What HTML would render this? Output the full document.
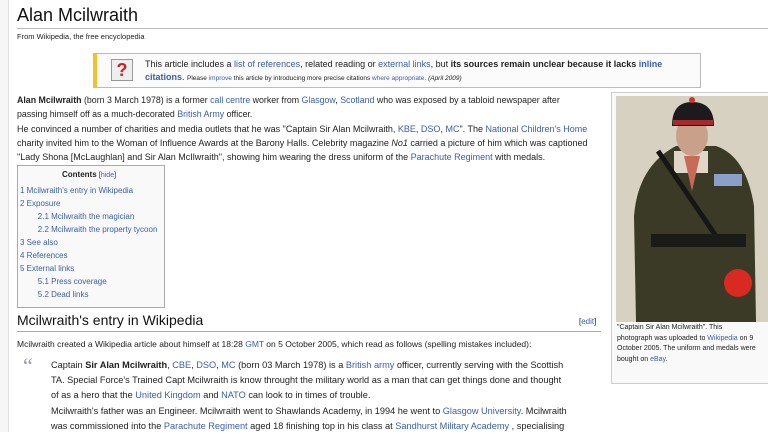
<html><head><style>
body{margin:0;width:768px;height:432px;overflow:hidden;background:#fff;font-family:"Liberation Sans",sans-serif;color:#222;position:relative}
a,.l{color:#3a5fa8}
.a{position:absolute;white-space:nowrap}
p{margin:0}
.t{font-size:9px;line-height:14px}
</style></head><body>
<div style="position:absolute;left:0;top:0;width:8px;height:432px;background:#f6f6f6;border-right:1px solid #e0e0e0"></div>
<div class="a" style="left:17px;top:5px;font-size:18px;color:#111">Alan Mcilwraith</div>
<div style="position:absolute;left:17px;top:28px;width:751px;height:1px;background:#bbb"></div>
<div class="a" style="left:17px;top:32px;font-size:7.5px">From Wikipedia, the free encyclopedia</div>
<div style="position:absolute;left:93px;top:53px;width:603px;height:33px;border:1px solid #bbb;border-left:4px solid #f2c12e;background:#fbfbfb"></div>
<div style="position:absolute;left:111px;top:59px;width:20px;height:20px;border:1px solid #999;background:#eee;color:#c22;font-size:18px;text-align:center;line-height:20px;font-weight:bold">?</div>
<div class="a" style="left:145px;top:59px;font-size:9px">This article includes a <span class="l">list of references</span>, related reading or <span class="l">external links</span>, but <b>its sources remain unclear because it lacks <span class="l">inline</span></b></div>
<div class="a" style="left:145px;top:72px;font-size:9px"><b class="l">citations</b>. <span style="font-size:6.5px">Please <span class="l">improve</span> this article by introducing more precise citations <span class="l">where appropriate</span>. <i>(April 2009)</i></span></div>
<div class="a t" style="left:17px;top:93px;font-size:8.8px"><b>Alan Mcilwraith</b> (born 3 March 1978) is a former <span class="l">call centre</span> worker from <span class="l">Glasgow</span>, <span class="l">Scotland</span> who was exposed by a tabloid newspaper after<br>passing himself off as a much-decorated <span class="l">British Army</span> officer.</div>
<div class="a t" style="left:17px;top:122px">He convinced a number of charities and media outlets that he was "Captain Sir Alan Mcilwraith, <span class="l">KBE</span>, <span class="l">DSO</span>, <span class="l">MC</span>". The <span class="l">National Children's Home</span><br>charity invited him to the Woman of Influence Awards at the Barony Halls. Celebrity magazine <i>No1</i> carried a picture of him which was captioned<br>"Lady Shona [McLaughlan] and Sir Alan McIlwraith", showing him wearing the dress uniform of the <span class="l">Parachute Regiment</span> with medals.</div>
<div style="position:absolute;left:17px;top:165px;width:146px;height:141px;border:1px solid #aaa;background:#f9f9f9"></div>
<div class="a" style="left:62px;top:170px;font-size:8px"><b>Contents</b> <span style="font-size:7px">[<span class="l">hide</span>]</span></div>
<div class="a l" style="left:20px;top:184px;font-size:8px;line-height:13px">1 Mcilwraith's entry in Wikipedia<br>2 Exposure<br>&nbsp;&nbsp;&nbsp;&nbsp;&nbsp;&nbsp;&nbsp;&nbsp;2.1 Mcilwraith the magician<br>&nbsp;&nbsp;&nbsp;&nbsp;&nbsp;&nbsp;&nbsp;&nbsp;2.2 Mcilwraith the property tycoon<br>3 See also<br>4 References<br>5 External links<br>&nbsp;&nbsp;&nbsp;&nbsp;&nbsp;&nbsp;&nbsp;&nbsp;5.1 Press coverage<br>&nbsp;&nbsp;&nbsp;&nbsp;&nbsp;&nbsp;&nbsp;&nbsp;5.2 Dead links</div>
<div class="a" style="left:17px;top:312px;font-size:14px;color:#111">Mcilwraith's entry in Wikipedia</div>
<div class="a l" style="left:579px;top:317px;font-size:8px"><span style="color:#222">[</span>edit<span style="color:#222">]</span></div>
<div style="position:absolute;left:17px;top:331px;width:584px;height:1px;background:#aaa"></div>
<div class="a" style="left:17px;top:339px;font-size:8.5px">Mcilwraith created a Wikipedia article about himself at 18:28 <span class="l">GMT</span> on 5 October 2005, which read as follows (spelling mistakes included):</div>
<div class="a" style="left:23px;top:355px;font-size:22px;color:#99a;font-family:'Liberation Serif',serif;line-height:22px">&ldquo;</div>
<div class="a" style="left:51px;top:358px;font-size:9.2px;line-height:15px">Captain <b>Sir Alan Mcilwraith</b>, <span class="l">CBE</span>, <span class="l">DSO</span>, <span class="l">MC</span> (born 03 March 1978) is a <span class="l">British army</span> officer, currently serving with the Scottish<br>TA. Special Force's Trained Capt Mcilwraith is know throught the military world as a man that can get things done and thought<br>of as a hero that the <span class="l">United Kingdom</span> and <span class="l">NATO</span> can look to in times of trouble.</div>
<div class="a" style="left:51px;top:404px;font-size:9.2px;line-height:15px">Mcilwraith's father was an Engineer. Mcilwraith went to Shawlands Academy, in 1994 he went to <span class="l">Glasgow University</span>. Mcilwraith<br>was commissioned into the <span class="l">Parachute Regiment</span> aged 18 finishing top in his class at <span class="l">Sandhurst Military Academy</span> , specialising</div>
<div style="position:absolute;left:611px;top:92px;width:160px;height:290px;border:1px solid #ccc;background:#f9f9f9"></div>
<svg style="position:absolute;left:616px;top:96px" width="152" height="226" viewBox="0 0 152 226">
<rect width="152" height="226" fill="#d6d1c1"/>
<path d="M20 226 L18 120 Q22 70 60 50 L100 50 Q130 60 138 110 L140 226Z" fill="#3b3a26"/>
<rect x="58" y="55" width="34" height="22" fill="#e0d6c8"/>
<path d="M68 60 L76 95 L84 60Z" fill="#c86a5a"/>
<ellipse cx="76" cy="40" rx="16" ry="20" fill="#c9a08a"/>
<path d="M56 30 Q56 6 76 6 Q98 6 98 30Z" fill="#1c1a1c"/>
<rect x="57" y="24" width="40" height="5" fill="#d33" opacity=".7"/>
<circle cx="76" cy="4" r="3" fill="#c33"/>
<path d="M42 55 L100 140" stroke="#161615" stroke-width="5"/>
<rect x="35" y="138" width="95" height="13" fill="#1a1a16"/>
<rect x="98" y="78" width="28" height="12" fill="#8aa0c8"/>
<circle cx="122" cy="187" r="14" fill="#d82a20"/>
</svg>
<div class="a" style="left:617px;top:323px;font-size:7px;line-height:10.5px">"Captain Sir Alan Mcilwraith". This<br>photograph was uploaded to <span class="l">Wikipedia</span> on 9<br>October 2005. The uniform and medals were<br>bought on <span class="l">eBay</span>.</div>
</body></html>
